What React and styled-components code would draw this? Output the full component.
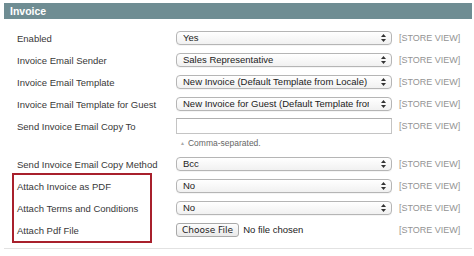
import React from "react";
import styled, { createGlobalStyle } from "styled-components";

const Global = createGlobalStyle`
  html, body { margin: 0; padding: 0; background: #fff; }
  body { font-family: "Liberation Sans", Arial, sans-serif; }
  * { box-sizing: border-box; }
`;

const Page = styled.div`
  width: 474px;
  height: 256px;
  padding: 3px 2px 0 4px;
  background: #fff;
`;

const Section = styled.div`
  border-bottom: 1px solid #e2e2e2;
  padding-bottom: 7px;
`;

const Header = styled.div`
  height: 16px;
  background: #6f8d93;
  color: #fff;
  font-weight: bold;
  font-size: 10.5px;
  line-height: 16px;
  padding-left: 6px;
`;

const Body = styled.div`
  padding-top: 8px;
`;

const Row = styled.div`
  display: flex;
  align-items: center;
  height: 22px;
`;

const Label = styled.div`
  width: 172px;
  padding-left: 13px;
  font-size: 9.5px;
  color: #383838;
  white-space: nowrap;
`;

const Control = styled.div`
  position: relative;
  width: 216px;
  display: flex;
  align-items: center;
`;

const Select = styled.select`
  appearance: none;
  -webkit-appearance: none;
  width: 100%;
  height: 14px;
  border: 1px solid #b5b5b5;
  border-radius: 4px;
  background: linear-gradient(#ffffff, #f1f1f1);
  font-family: "Liberation Sans", Arial, sans-serif;
  font-size: 9.5px;
  color: #222;
  padding: 0 22px 0 6px;
  line-height: 12px;
  outline: none;
  box-shadow: 0 1px 0 rgba(0, 0, 0, 0.04);
`;

const Arrows = styled.svg`
  position: absolute;
  right: 6px;
  top: 50%;
  transform: translateY(-50%);
  pointer-events: none;
`;

const TextInput = styled.input`
  width: 100%;
  height: 16px;
  border: 1px solid #c4c4c4;
  border-top-color: #b0b0b0;
  background: #fff;
  outline: none;
  font-size: 10px;
`;

const FileInput = styled.input`
  font-family: "Liberation Sans", Arial, sans-serif;
  font-size: 9.5px;
  color: #222;
  height: 14px;
  &::file-selector-button {
    font-family: "DejaVu Sans", sans-serif;
    font-size: 9px;
    height: 14px;
    padding: 0 5px;
    margin-right: 4px;
    border: 1px solid #a9a9a9;
    border-radius: 3px;
    background: linear-gradient(#fdfdfd, #e9e9e9);
    color: #222;
  }
`;

const Scope = styled.div`
  margin-left: 7px;
  font-size: 9px;
  color: #939393;
  white-space: nowrap;
`;

const Comment = styled.div`
  height: 16px;
  padding-left: 176px;
  font-size: 8.5px;
  color: #666;
  display: flex;
  align-items: flex-start;
  padding-top: 1px;
  gap: 3px;
`;

const Tri = styled.span`
  font-size: 5px;
  color: #aaa;
  line-height: 11px;
`;

const Highlight = styled.div`
  position: relative;
  &::before {
    content: "";
    position: absolute;
    left: 8px;
    top: -2px;
    width: 136px;
    height: 66px;
    border: 2px solid #a8202c;
    pointer-events: none;
  }
`;

const ArrowIcon = () => (
  <Arrows width="5" height="8" viewBox="0 0 5 8">
    <path d="M2.5 0 L5 3 L0 3 Z" fill="#333" />
    <path d="M0 5 L5 5 L2.5 8 Z" fill="#333" />
  </Arrows>
);

const SelectRow = ({ label, value, options }) => (
  <Row>
    <Label>{label}</Label>
    <Control>
      <Select defaultValue={value}>
        {(options || [value]).map((o) => (
          <option key={o}>{o}</option>
        ))}
      </Select>
      <ArrowIcon />
    </Control>
    <Scope>[STORE VIEW]</Scope>
  </Row>
);

export default function App() {
  return (
    <>
      <Global />
      <Page>
        <Section>
          <Header>Invoice</Header>
          <Body>
            <SelectRow label="Enabled" value="Yes" options={["Yes", "No"]} />
            <SelectRow label="Invoice Email Sender" value="Sales Representative" />
            <SelectRow
              label="Invoice Email Template"
              value="New Invoice (Default Template from Locale)"
            />
            <SelectRow
              label="Invoice Email Template for Guest"
              value="New Invoice for Guest (Default Template from Locale)"
            />
            <Row>
              <Label>Send Invoice Email Copy To</Label>
              <Control>
                <TextInput type="text" />
              </Control>
              <Scope>[STORE VIEW]</Scope>
            </Row>
            <Comment>
              <Tri>▲</Tri>
              <span>Comma-separated.</span>
            </Comment>
            <SelectRow label="Send Invoice Email Copy Method" value="Bcc" options={["Bcc", "Separate Email"]} />
            <Highlight>
              <SelectRow label="Attach Invoice as PDF" value="No" options={["Yes", "No"]} />
              <SelectRow label="Attach Terms and Conditions" value="No" options={["Yes", "No"]} />
              <Row>
                <Label>Attach Pdf File</Label>
                <Control>
                  <FileInput type="file" />
                </Control>
                <Scope>[STORE VIEW]</Scope>
              </Row>
            </Highlight>
          </Body>
        </Section>
      </Page>
    </>
  );
}
